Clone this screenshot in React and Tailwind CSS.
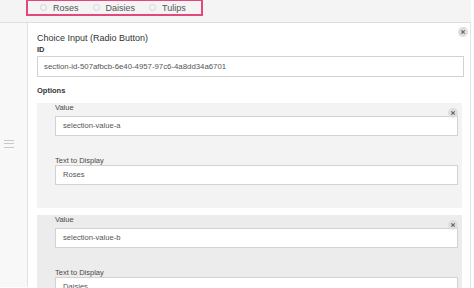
import React from "react";

const CloseBtn = ({ className }) => (
  <svg width="10" height="10" viewBox="0 0 10 10" className={className}>
    <circle cx="5" cy="5" r="5" fill="#dedede" />
    <path d="M3.3 3.3 L6.7 6.7 M6.7 3.3 L3.3 6.7" stroke="#666" strokeWidth="1.2" />
  </svg>
);

const Radio = ({ label }) => (
  <div className="flex items-center">
    <span className="w-[7px] h-[7px] rounded-full border border-[#d4d4d4] bg-[#f4f4f4]" />
    <span className="ml-[6px] text-[9px] leading-[12px] text-[#555]">{label}</span>
  </div>
);

const Field = ({ label, value, first }) => (
  <>
    <div className={`text-[7.5px] leading-[10px] text-[#4a4a4a] ${first ? "mt-[7px]" : "mt-[20px]"}`}>
      {label}
    </div>
    <div className={`h-[20px] bg-white border border-[#d2d2d2] pl-[7px] flex items-center text-[7.6px] text-[#555] ${first ? "mt-[3px]" : "-mt-[1px]"}`}>
      {value}
    </div>
  </>
);

const OptionPanel = ({ value, text, bg }) => (
  <div className={`relative ${bg} pl-[18px] pr-[4px] pb-[23px] w-[425px]`}>
    <CloseBtn className="absolute top-[5px] right-[4px]" />
    <Field label="Value" value={value} first />
    <Field label="Text to Display" value={text} />
  </div>
);

export default function App() {
  return (
    <div
      className="w-[474px] h-[288px] overflow-hidden bg-white"
      style={{ fontFamily: '"Liberation Sans", Arial, sans-serif' }}
    >
      {/* top preview strip */}
      <div className="w-[471px] h-[24px] bg-[#f4f4f4] border-b border-[#dedede]">
        <div className="ml-[26px] -mt-[1px] w-[177px] h-[17px] border-2 border-[#e4467e] flex items-center pl-[12px] gap-[14px]">
          <Radio label="Roses" />
          <Radio label="Daisies" />
          <Radio label="Tulips" />
        </div>
      </div>

      <div className="flex">
        {/* drag handle column */}
        <div className="w-[28px] h-[264px] bg-[#f8f8f8] border-r border-[#e0e0e0] pt-[117px] pl-[4px]">
          <div className="w-[10px] flex flex-col gap-[2.3px]">
            <span className="h-px bg-[#c9c9c9]" />
            <span className="h-px bg-[#c9c9c9]" />
            <span className="h-px bg-[#c9c9c9]" />
          </div>
        </div>

        {/* editor card */}
        <div className="relative w-[443px] bg-white border-r border-[#e4e4e4] pl-[9px] pr-[6px] pt-[9px]">
          <CloseBtn className="absolute top-[4px] right-[2px]" />
          <div className="text-[9px] leading-[12px] text-[#333]">Choice Input (Radio Button)</div>
          <div className="mt-[1px] text-[7.5px] leading-[10px] font-bold text-[#333]">ID</div>
          <div className="mt-[1px] w-[427px] h-[21px] border border-[#d2d2d2] pl-[6px] flex items-center text-[7.8px] text-[#555]">
            section-id-507afbcb-6e40-4957-97c6-4a8dd34a6701
          </div>
          <div className="mt-[9px] text-[7.5px] leading-[10px] font-bold text-[#333]">Options</div>
          <OptionPanel value="selection-value-a" text="Roses" bg="bg-[#f3f3f3]" />
          <OptionPanel value="selection-value-b" text="Daisies" bg="bg-[#ececec]" />
        </div>
      </div>
    </div>
  );
}
